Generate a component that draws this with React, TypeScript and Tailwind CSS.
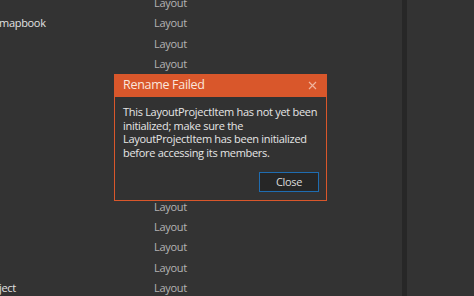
import * as React from "react";

const rows: { name: string; kind: string }[] = [
  { name: "", kind: "Layout" },
  { name: "mapbook", kind: "Layout" },
  { name: "", kind: "Layout" },
  { name: "", kind: "Layout" },
  { name: "", kind: "Layout" },
  { name: "", kind: "Layout" },
  { name: "", kind: "Layout" },
  { name: "", kind: "Layout" },
  { name: "", kind: "Layout" },
  { name: "", kind: "Layout" },
  { name: "", kind: "Layout" },
  { name: "", kind: "Layout" },
  { name: "", kind: "Layout" },
  { name: "", kind: "Layout" },
  { name: "ject", kind: "Layout" },
];

export default function App() {
  return (
    <div
      className="relative w-[474px] h-[296px] overflow-hidden bg-[#333333] flex tracking-[-0.3px]"
      style={{ fontFamily: '"Open Sans", "Noto Sans", sans-serif' }}
    >
      {/* list */}
      <div className="w-[402px] -mt-[7px] flex flex-col">
        {rows.map((r, i) => (
          <div key={i} className="h-[20.36px] shrink-0 flex items-center text-[11px]">
            <span className="w-[155px] text-[#e2e2e2] -ml-[1px]">{r.name}</span>
            <span className="text-[#b4b4b4]">{r.kind}</span>
          </div>
        ))}
      </div>
      <div className="w-[5px] bg-[#272727]" />
      <div className="flex-1" />

      {/* dialog */}
      <div className="absolute left-[114px] top-[74px] w-[213px] h-[127px] border border-[#d9572b] border-t-0 bg-[#323232] flex flex-col">
        <div className="h-[23px] bg-[#d9572b] -mx-[1px] flex items-center justify-between pl-[9px] pr-[9px]">
          <span className="text-[12.5px] text-[#fbe6dc]">Rename Failed</span>
          <svg width="9" height="9" viewBox="0 0 9 9" className="mr-[1px]">
            <path d="M1 1L8 8M8 1L1 8" stroke="#f0b49c" strokeWidth="1.2" />
          </svg>
        </div>
        <div className="pl-[8px] pr-[4px] pt-[8px] text-[11px] leading-[13.7px] text-[#e6e6e6]">
          This LayoutProjectItem has not yet been initialized; make sure the LayoutProjectItem has been initialized before accessing its members.
        </div>
        <div className="flex-1" />
        <div className="flex justify-end pr-[7px] pb-[8px]">
          <button className="w-[60px] h-[20px] border border-[#1f6cb0] bg-[#262626] text-[11px] text-[#dcdcdc]">
            Close
          </button>
        </div>
      </div>
    </div>
  );
}
